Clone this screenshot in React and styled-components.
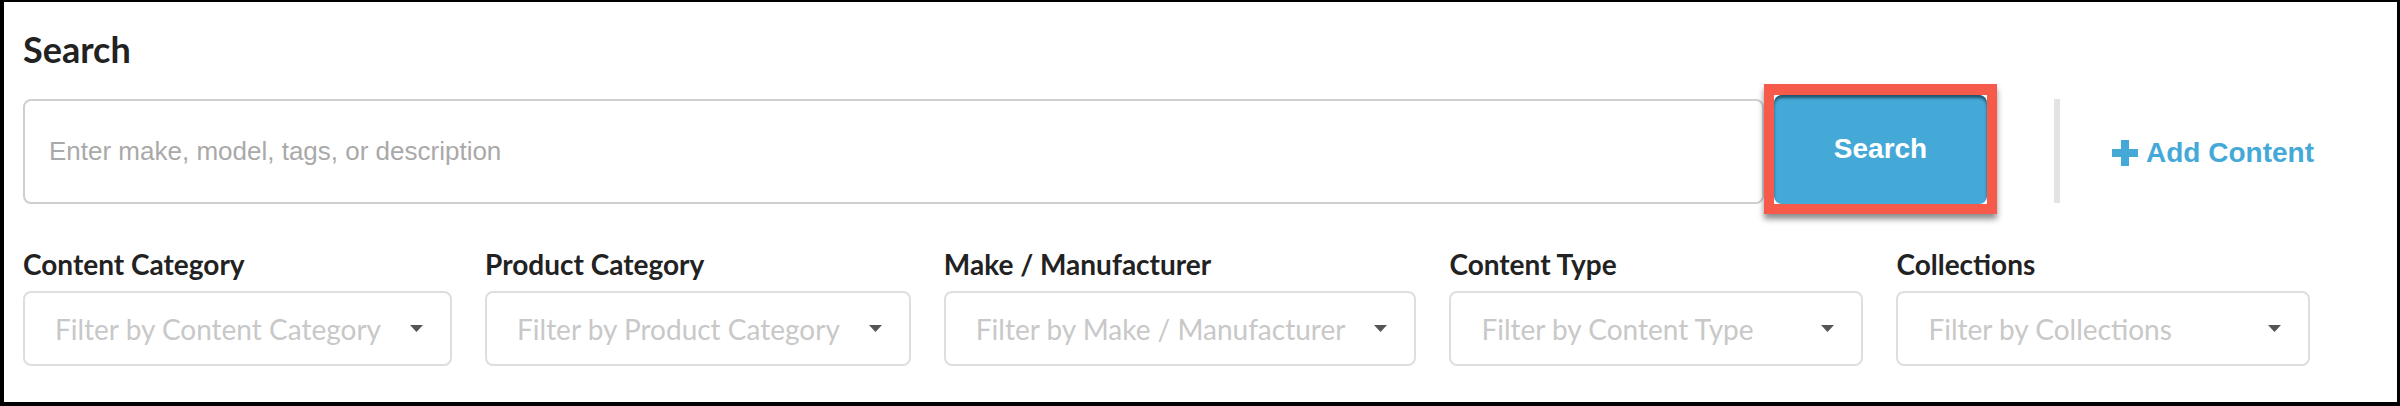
import React from "react";
import styled, { createGlobalStyle } from "styled-components";

const GlobalStyle = createGlobalStyle`
  html, body { margin: 0; padding: 0; background: #fff; }
  body { width: 2400px; height: 406px; overflow: hidden; }
  *, *::before, *::after { box-sizing: border-box; }
`;

const Panel = styled.section`
  width: 2400px;
  height: 406px;
  border-style: solid;
  border-color: #000;
  border-width: 2px 3px 4px 4px;
  padding: 26px 0 0 19px;
  background: #fff;
  font-family: Lato, "Noto Sans", sans-serif;
`;

const Title = styled.h1`
  margin: 0;
  font: 700 36px/43px Lato, "Noto Sans", sans-serif;
  color: #222;
`;

const SearchRow = styled.div`
  display: flex;
  align-items: flex-start;
  height: 130px;
  margin-top: 13px;
  padding-right: 83px;
`;

const SearchInput = styled.input`
  flex: 1;
  min-width: 0;
  height: 105px;
  margin-top: 15px;
  border: 2px solid #cfcfcf;
  border-radius: 8px;
  padding: 0 24px;
  font: 400 26px "Liberation Sans", Arial, sans-serif;
  color: #333;
  outline: none;
  background: #fff;
  &::placeholder { color: #a9a9a9; }
`;

const Highlight = styled.div`
  flex: none;
  width: 233px;
  height: 130px;
  border: 10px solid #f65a4a;
  border-top-width: 11px;
  background: #fff;
  box-shadow: 0 5px 6px rgba(0, 0, 0, 0.45);
`;

const SearchButton = styled.button`
  display: block;
  width: 100%;
  height: 100%;
  padding: 0 0 2px;
  border: none;
  border-radius: 8px;
  background: #45a9d8;
  color: #fff;
  font: 700 28px "Liberation Sans", Arial, sans-serif;
  box-shadow: inset 0 3px 3px rgba(0, 0, 0, 0.5);
  cursor: pointer;
`;

const Divider = styled.div`
  flex: none;
  width: 6px;
  height: 104px;
  margin: 15px 0 0 57px;
  background: #e3e3e3;
`;

const AddButton = styled.button`
  flex: none;
  align-self: center;
  margin: 8px 0 0 52px;
  display: flex;
  align-items: center;
  gap: 8px;
  padding: 0;
  border: none;
  background: none;
  color: #45a9d8;
  font: 700 28px "Liberation Sans", Arial, sans-serif;
  cursor: pointer;
`;

const FilterRow = styled.div`
  display: flex;
  gap: 33px;
  margin-top: 33px;
`;

const FilterGroup = styled.div`
  display: flex;
  flex-direction: column;
  align-items: flex-start;
  gap: 10px;
`;

const FilterLabel = styled.label`
  font: 700 28px/34px Lato, "Noto Sans", sans-serif;
  color: #222;
`;

const Select = styled.button`
  min-width: 414px;
  height: 75px;
  display: inline-flex;
  align-items: center;
  justify-content: space-between;
  gap: 29px;
  padding: 0 27px 0 30px;
  border: 2px solid #dedede;
  border-radius: 8px;
  background: #fff;
  font: 400 28px Lato, "Noto Sans", sans-serif;
  color: #c8c8c8;
  cursor: pointer;
`;

const Caret = () => (
  <svg width="13" height="7" viewBox="0 0 13 7" aria-hidden="true">
    <polygon points="0,0 13,0 6.5,7" fill="#555" />
  </svg>
);

const PlusIcon = () => (
  <svg width="26" height="26" viewBox="0 0 26 26" aria-hidden="true">
    <rect x="9" y="0" width="8" height="26" fill="#45a9d8" />
    <rect x="0" y="9" width="26" height="8" fill="#45a9d8" />
  </svg>
);

const filters = [
  "Content Category",
  "Product Category",
  "Make / Manufacturer",
  "Content Type",
  "Collections",
];

export default function App() {
  return (
    <>
      <GlobalStyle />
      <Panel>
        <Title>Search</Title>
        <SearchRow>
          <SearchInput placeholder="Enter make, model, tags, or description" />
          <Highlight>
            <SearchButton>Search</SearchButton>
          </Highlight>
          <Divider />
          <AddButton>
            <PlusIcon />
            Add Content
          </AddButton>
        </SearchRow>
        <FilterRow>
          {filters.map((f) => (
            <FilterGroup key={f}>
              <FilterLabel>{f}</FilterLabel>
              <Select>
                <span>Filter by {f}</span>
                <Caret />
              </Select>
            </FilterGroup>
          ))}
        </FilterRow>
      </Panel>
    </>
  );
}
